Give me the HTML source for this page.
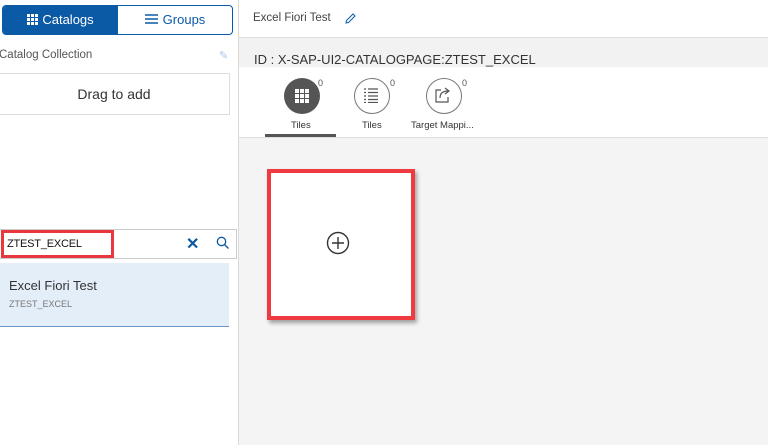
<!DOCTYPE html><html><head><style>
body{margin:0;width:768px;height:445px;overflow:hidden;font-family:"Liberation Sans",sans-serif;background:#f4f4f4;position:relative}
.a{position:absolute}
</style></head><body>
<div class="a" style="left:0;top:0;width:238px;height:445px;background:#fff;border-right:1px solid #d9d9d9"></div>
<div class="a" style="left:2px;top:5px;width:229px;height:28px;border:1px solid #0a5aa8;border-radius:4px;overflow:hidden;background:#fff">
 <div class="a" style="left:0;top:0;width:115px;height:28px;background:#0b5aa6;color:#fff;font-size:13px;line-height:28px;text-align:center">
  <svg width="11" height="11" style="vertical-align:-1px;margin-right:4px" viewBox="0 0 11 11" fill="#fff"><rect x="0" y="0" width="3" height="3"/><rect x="4" y="0" width="3" height="3"/><rect x="8" y="0" width="3" height="3"/><rect x="0" y="4" width="3" height="3"/><rect x="4" y="4" width="3" height="3"/><rect x="8" y="4" width="3" height="3"/><rect x="0" y="8" width="3" height="3"/><rect x="4" y="8" width="3" height="3"/><rect x="8" y="8" width="3" height="3"/></svg>Catalogs</div>
 <div class="a" style="left:115px;top:0;width:114px;height:28px;color:#0b5aa6;font-size:13px;line-height:28px;text-align:center">
  <svg width="13" height="10" style="vertical-align:0;margin-right:5px" viewBox="0 0 13 10" stroke="#0b5aa6" stroke-width="1.6"><path d="M0 1H13M0 5H13M0 9H13"/></svg>Groups</div>
</div>
<div class="a" style="left:-1px;top:49px;font-size:11.5px;color:#555">Catalog Collection</div>
<div class="a" style="left:219px;top:49px;color:#a9c7e8;font-size:11px">✎</div>
<div class="a" style="left:-2px;top:73px;width:230px;height:40px;border:1px solid #ddd;background:#fff;font-size:14px;color:#333;text-align:center;line-height:40px">Drag to add</div>
<div class="a" style="left:-2px;top:229px;width:237px;height:28px;border:1px solid #ccc;background:#fff"></div>
<div class="a" style="left:1px;top:230px;width:104px;height:22px;border:3px solid #e8383d;font-size:11px;line-height:22px;padding-left:3px;color:#111;letter-spacing:-0.2px">ZTEST_EXCEL</div>
<div class="a" style="left:186px;top:234px;font-size:16px;color:#0b5aa6;font-weight:bold">✕</div>
<svg class="a" style="left:216px;top:236px" width="14" height="14" viewBox="0 0 14 14" fill="none" stroke="#0b5aa6" stroke-width="1.3"><circle cx="5.5" cy="5.5" r="4.2"/><path d="M8.5 8.5L12.5 12.5"/></svg>
<div class="a" style="left:0;top:263px;width:229px;height:63px;background:#e4eef9;border-bottom:1px solid #6d95c4"></div>
<div class="a" style="left:9px;top:278px;font-size:13px;color:#333">Excel Fiori Test</div>
<div class="a" style="left:9px;top:299px;font-size:9px;color:#777">ZTEST_EXCEL</div>

<div class="a" style="left:239px;top:0;width:529px;height:37px;background:#fff;border-bottom:1px solid #ddd"></div>
<div class="a" style="left:253px;top:12px;font-size:11.5px;color:#444">Excel Fiori Test</div>
<svg class="a" style="left:345px;top:13px" width="11" height="11" viewBox="0 0 11 11" fill="none" stroke="#0b5aa6" stroke-width="1"><path d="M1 10L1.5 7.5L8 1L10 3L3.5 9.5Z"/></svg>
<div class="a" style="left:239px;top:38px;width:529px;height:29px;background:#f2f2f2"></div>
<div class="a" style="left:254px;top:52px;font-size:13px;color:#333">ID : X-SAP-UI2-CATALOGPAGE:ZTEST_EXCEL</div>
<div class="a" style="left:239px;top:67px;width:529px;height:70px;background:#fff;border-bottom:1px solid #ddd"></div>
<div class="a" style="left:284px;top:78px;width:36px;height:36px;border-radius:50%;background:#555"></div>
<svg class="a" style="left:295px;top:89px" width="14" height="14" viewBox="0 0 14 14" fill="#fff"><rect x="0" y="0" width="4" height="4"/><rect x="5" y="0" width="4" height="4"/><rect x="10" y="0" width="4" height="4"/><rect x="0" y="5" width="4" height="4"/><rect x="5" y="5" width="4" height="4"/><rect x="10" y="5" width="4" height="4"/><rect x="0" y="10" width="4" height="4"/><rect x="5" y="10" width="4" height="4"/><rect x="10" y="10" width="4" height="4"/></svg>
<div class="a" style="left:354px;top:78px;width:34px;height:34px;border-radius:50%;border:1px solid #777;background:#fff"></div>
<svg class="a" style="left:364px;top:88px" width="14" height="15" viewBox="0 0 14 15" stroke="#555" stroke-width="1.2"><path d="M0 1H2M4 1H14M0 4.5H2M4 4.5H14M0 8H2M4 8H14M0 11.5H2M4 11.5H14M0 14.5H2M4 14.5H14"/></svg>
<div class="a" style="left:426px;top:78px;width:34px;height:34px;border-radius:50%;border:1px solid #777;background:#fff"></div>
<svg class="a" style="left:435px;top:87px" width="17" height="16" viewBox="0 0 17 16" fill="none" stroke="#555" stroke-width="1.2"><path d="M6 3H1V15H13V10"/><path d="M5 11C5 6 8 4 13 4M10 1L14 4L10 7"/></svg>
<div class="a" style="left:318px;top:78px;font-size:9px;color:#555">0</div>
<div class="a" style="left:390px;top:78px;font-size:9px;color:#555">0</div>
<div class="a" style="left:462px;top:78px;font-size:9px;color:#555">0</div>
<div class="a" style="left:291px;top:120px;font-size:9.5px;color:#333">Tiles</div>
<div class="a" style="left:362px;top:120px;font-size:9.5px;color:#333">Tiles</div>
<div class="a" style="left:411px;top:120px;font-size:9.5px;color:#333">Target Mappi...</div>
<div class="a" style="left:265px;top:134px;width:71px;height:3px;background:#555"></div>

<div class="a" style="left:267px;top:169px;width:140px;height:143px;border:4px solid #ef3a3f;background:#fff;box-shadow:2px 3px 4px rgba(0,0,0,.35)"></div>
<svg class="a" style="left:326px;top:231px" width="24" height="24" viewBox="0 0 24 24" fill="none" stroke="#333" stroke-width="1.4"><circle cx="12" cy="12" r="10.5"/><path d="M12 6V18M6 12H18"/></svg>
</body></html>
